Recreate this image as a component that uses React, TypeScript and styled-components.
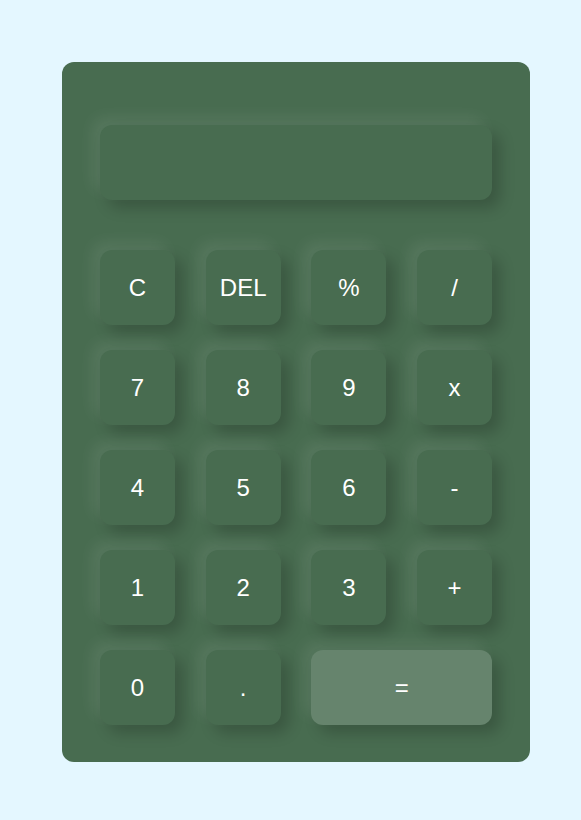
import React from "react";
import styled, { createGlobalStyle } from "styled-components";

const Global = createGlobalStyle`
  html, body { margin: 0; padding: 0; background: #e4f7ff; }
  body { font-family: "Liberation Sans", Arial, sans-serif; }
`;

const Page = styled.div`
  padding: 62px 0 0 62px;
`;

const Card = styled.div`
  width: 468px;
  height: 700px;
  box-sizing: border-box;
  background: #486c50;
  border-radius: 12px;
  padding: 63px 38px 37px;
  display: flex;
  flex-direction: column;
  gap: 50px;
`;

const Display = styled.div`
  height: 75px;
  border-radius: 12px;
  background: #486c50;
  box-shadow: -8px -8px 15px rgba(255, 255, 255, 0.08),
    8px 8px 15px rgba(0, 0, 0, 0.2);
  color: #fff;
  font-size: 28px;
  display: flex;
  align-items: center;
  justify-content: flex-end;
  padding: 0 20px;
`;

const Keys = styled.div`
  display: grid;
  grid-template-columns: repeat(4, 75px);
  grid-auto-rows: 75px;
  justify-content: space-between;
  row-gap: 25px;
`;

const Key = styled.button<{ $wide?: boolean }>`
  grid-column: ${(p) => (p.$wide ? "span 2" : "span 1")};
  border: none;
  border-radius: 12px;
  background: ${(p) => (p.$wide ? "#66846d" : "#486c50")};
  color: #fff;
  font-family: "Liberation Sans", Arial, sans-serif;
  font-size: 24px;
  cursor: pointer;
  box-shadow: -8px -8px 15px rgba(255, 255, 255, 0.08),
    8px 8px 15px rgba(0, 0, 0, 0.2);
  display: flex;
  align-items: center;
  justify-content: center;
  padding: 0;
`;

const keys: { label: string; wide?: boolean }[] = [
  { label: "C" },
  { label: "DEL" },
  { label: "%" },
  { label: "/" },
  { label: "7" },
  { label: "8" },
  { label: "9" },
  { label: "x" },
  { label: "4" },
  { label: "5" },
  { label: "6" },
  { label: "-" },
  { label: "1" },
  { label: "2" },
  { label: "3" },
  { label: "+" },
  { label: "0" },
  { label: "." },
  { label: "=", wide: true },
];

export default function App() {
  return (
    <>
      <Global />
      <Page>
        <Card>
          <Display />
          <Keys>
            {keys.map((k) => (
              <Key key={k.label} $wide={k.wide}>
                {k.label}
              </Key>
            ))}
          </Keys>
        </Card>
      </Page>
    </>
  );
}
